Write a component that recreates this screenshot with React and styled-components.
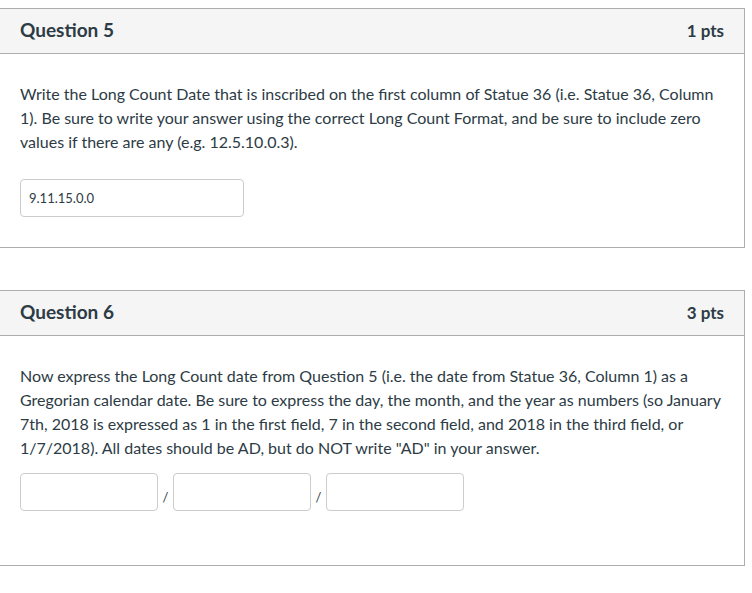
import React from "react"
import styled, { createGlobalStyle } from "styled-components"

const GlobalStyle = createGlobalStyle`
  html, body {
    margin: 0;
    padding: 0;
    background: #ffffff;
  }
  body {
    font-family: Lato, "Noto Sans", "Liberation Sans", sans-serif;
    color: #2d3b45;
  }
`

const Page = styled.div`
  padding-top: 8px;
  display: flex;
  flex-direction: column;
  gap: 42px;
`

const Card = styled.div`
  margin-left: -1px;
  width: 746px;
  box-sizing: border-box;
  border: 1px solid #adadad;
  background: #ffffff;
`

const Header = styled.div`
  height: 44px;
  display: flex;
  align-items: center;
  justify-content: space-between;
  padding: 0 20px;
  background: #f5f5f5;
  border-bottom: 1px solid #adadad;
`

const Title = styled.div`
  font-size: 19px;
  font-weight: 700;
  color: #2d3b45;
  margin-bottom: 4px;
`

const Points = styled.div`
  font-size: 17px;
  font-weight: 700;
  color: #2d3b45;
  margin-bottom: 1px;
`

const Body = styled.div`
  padding: ${(p) => p.$pad};
  padding-left: 20px;
  padding-right: 22px;
`

const Text = styled.p`
  margin: 0 0 ${(p) => p.$gap}px;
  font-size: 16px;
  line-height: 24px;
  color: #2d3b45;
`

const Answer = styled.div`
  width: 224px;
  height: 38px;
  box-sizing: border-box;
  border: 1px solid #cccccc;
  border-radius: 4px;
  display: flex;
  align-items: center;
  padding: 0 8px;
  font-size: 13px;
  color: #2d3b45;
`

const DateRow = styled.div`
  display: flex;
  align-items: center;
  gap: 4px;
`

const DateBox = styled.div`
  width: 138px;
  height: 38px;
  box-sizing: border-box;
  border: 1px solid #cccccc;
  border-radius: 4px;
`

const Slash = styled.span`
  width: 7px;
  text-align: center;
  font-size: 13px;
  color: #2d3b45;
  padding-top: 10px;
`

export default function App() {
  return (
    <>
      <GlobalStyle />
      <Page>
        <Card>
          <Header>
            <Title>Question 5</Title>
            <Points>1 pts</Points>
          </Header>
          <Body $pad="28px 0 30px">
            <Text $gap={25}>
              Write the Long Count Date that is inscribed on the first column of
              Statue 36 (i.e. Statue 36, Column 1). Be sure to write your answer
              using the correct Long Count Format, and be sure to include zero
              values if there are any (e.g. 12.5.10.0.3).
            </Text>
            <Answer>9.11.15.0.0</Answer>
          </Body>
        </Card>
        <Card>
          <Header>
            <Title>Question 6</Title>
            <Points>3 pts</Points>
          </Header>
          <Body $pad="28px 0 54px">
            <Text $gap={13}>
              Now express the Long Count date from Question 5 (i.e. the date from
              Statue 36, Column 1) as a Gregorian calendar date. Be sure to
              express the day, the month, and the year as numbers (so January
              7th, 2018 is expressed as 1 in the first field, 7 in the second
              field, and 2018 in the third field, or 1/7/2018). All dates should
              be AD, but do NOT write "AD" in your answer.
            </Text>
            <DateRow>
              <DateBox />
              <Slash>/</Slash>
              <DateBox />
              <Slash>/</Slash>
              <DateBox />
            </DateRow>
          </Body>
        </Card>
      </Page>
    </>
  )
}
